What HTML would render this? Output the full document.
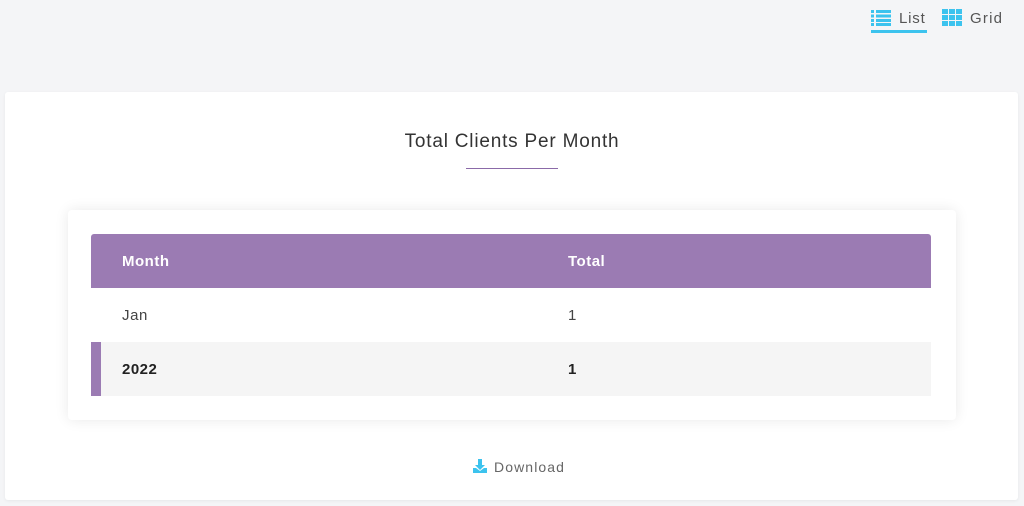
<!DOCTYPE html>
<html><head><style>
body{margin:0;width:1024px;height:506px;background:#f4f5f7;font-family:"Liberation Sans",sans-serif;position:relative;overflow:hidden}
.a{position:absolute}
.card{left:5px;top:92px;width:1013px;height:408px;background:#fff;border-radius:3px;box-shadow:0 1px 3px rgba(0,0,0,.06)}
.inner{left:68px;top:210px;width:888px;height:210px;background:#fff;border-radius:4px;box-shadow:0 0 14px rgba(0,0,0,.09)}
.t{font-size:15px;color:#444;letter-spacing:.6px}
.b{font-weight:bold;font-size:15px;letter-spacing:.5px}
</style></head><body>
<div class="a" style="left:871px;top:9px;width:20px;height:17px">
<svg width="20" height="17"><g fill="#3cc3ee"><rect x="0" y="1" width="3" height="3"/><rect x="5" y="1" width="15" height="3"/><rect x="0" y="5.5" width="3" height="3"/><rect x="5" y="5.5" width="15" height="3"/><rect x="0" y="10" width="3" height="3"/><rect x="5" y="10" width="15" height="3"/><rect x="0" y="14" width="3" height="3"/><rect x="5" y="14" width="15" height="3"/></g></svg></div>
<div class="a" style="left:899px;top:10px;font-size:15px;color:#555;letter-spacing:.8px">List</div>
<div class="a" style="left:871px;top:30px;width:56px;height:3px;background:#3cc3ee"></div>
<div class="a" style="left:942px;top:9px">
<svg width="20" height="17"><g fill="#3cc3ee"><rect x="0" y="0" width="6" height="5"/><rect x="7" y="0" width="6" height="5"/><rect x="14" y="0" width="6" height="5"/><rect x="0" y="6" width="6" height="5"/><rect x="7" y="6" width="6" height="5"/><rect x="14" y="6" width="6" height="5"/><rect x="0" y="12" width="6" height="5"/><rect x="7" y="12" width="6" height="5"/><rect x="14" y="12" width="6" height="5"/></g></svg></div>
<div class="a" style="left:970px;top:10px;font-size:15px;color:#555;letter-spacing:1.2px">Grid</div>
<div class="a card"></div>
<div class="a" style="left:0;width:1024px;top:131px;text-align:center;font-size:19px;color:#333;letter-spacing:.8px">Total Clients Per Month</div>
<div class="a" style="left:466px;top:168px;width:92px;height:1px;background:#8b6aa8"></div>
<div class="a inner"></div>
<div class="a" style="left:91px;top:234px;width:840px;height:54px;background:#9b7bb3;border-radius:3px 3px 0 0"></div>
<div class="a b" style="left:122px;top:253px;color:#fff">Month</div>
<div class="a b" style="left:568px;top:253px;color:#fff">Total</div>
<div class="a t" style="left:122px;top:307px">Jan</div>
<div class="a t" style="left:568px;top:307px">1</div>
<div class="a" style="left:91px;top:342px;width:840px;height:54px;background:#f5f5f5"></div>
<div class="a" style="left:91px;top:342px;width:10px;height:54px;background:#9b7bb3"></div>
<div class="a b" style="left:122px;top:361px;color:#222">2022</div>
<div class="a b" style="left:568px;top:361px;color:#222">1</div>
<div class="a" style="left:473px;top:459px"><svg width="14" height="14"><g fill="#3cc3ee"><rect x="5" y="0" width="4" height="6"/><path d="M2 6h10L7 11z"/><path d="M0 9h3l4 3 4-3h3v5H0z"/></g></svg></div>
<div class="a" style="left:494px;top:459px;font-size:14px;color:#666;letter-spacing:1.1px">Download</div>
</body></html>
